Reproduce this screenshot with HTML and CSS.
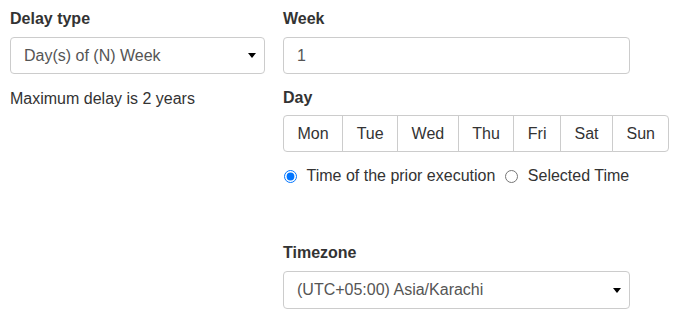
FILE: index.html
```html
<!DOCTYPE html>
<html lang="en">
<head>
    <meta charset="UTF-8">
    <meta name="viewport" content="width=device-width, initial-scale=1.0">
    <title>Delay Settings</title>
    <link rel="stylesheet" href="styles.css">
</head>
<body>
    <div class="delay-form">
        <div class="left-col">
            <label class="field-label">Delay type</label>
            <button type="button" class="dropdown">
                <span>Day(s) of (N) Week</span>
                <span class="caret"></span>
            </button>
            <p class="hint">Maximum delay is 2 years</p>
        </div>

        <div class="right-col">
            <label class="field-label" for="week">Week</label>
            <input type="text" id="week" class="text-input" value="1">

            <label class="field-label day-label">Day</label>
            <div class="day-group">
                <button type="button">Mon</button>
                <button type="button">Tue</button>
                <button type="button">Wed</button>
                <button type="button">Thu</button>
                <button type="button">Fri</button>
                <button type="button">Sat</button>
                <button type="button">Sun</button>
            </div>

            <div class="radio-row">
                <label class="radio"><input type="radio" name="timeMode" checked> Time of the prior execution</label>
                <label class="radio"><input type="radio" name="timeMode"> Selected Time</label>
            </div>

            <label class="field-label tz-label">Timezone</label>
            <button type="button" class="dropdown wide">
                <span>(UTC+05:00) Asia/Karachi</span>
                <span class="caret"></span>
            </button>
        </div>
    </div>
</body>
</html>
```

FILE: styles.css
```css
body {
    font-family: "Liberation Sans", Arial, sans-serif;
    font-size: 16px;
    line-height: 22px;
    color: #333;
    margin: 0;
    padding: 8px 10px;
    background-color: #fff;
}

.delay-form {
    display: flex;
    gap: 18px;
}

.left-col {
    width: 255px;
    display: flex;
    flex-direction: column;
}

.right-col {
    flex: 1;
    display: flex;
    flex-direction: column;
    align-items: flex-start;
}

.field-label {
    display: block;
    font-weight: bold;
    margin-bottom: 7px;
}

.dropdown,
.text-input {
    box-sizing: border-box;
    height: 37px;
    border: 1px solid #ccc;
    border-radius: 4px;
    background-color: #fff;
    font-family: inherit;
    font-size: 16px;
    color: #555;
    padding: 0 13px;
}

.dropdown {
    display: flex;
    align-items: center;
    justify-content: space-between;
    width: 255px;
    padding-right: 8px;
    text-align: left;
}

.dropdown.wide {
    height: 38px;
}

.dropdown.wide,
.text-input {
    width: 347px;
}

.text-input {
    outline: none;
}

.caret {
    width: 0;
    height: 0;
    border-left: 4px solid transparent;
    border-right: 4px solid transparent;
    border-top: 5px solid #000;
}

.hint {
    margin: 14px 0 0;
}

.day-label {
    margin-top: 13px;
    margin-bottom: 6px;
}

.day-group {
    display: flex;
}

.day-group button {
    height: 37px;
    padding: 0 13.5px;
    margin-left: -1px;
    border: 1px solid #ccc;
    background-color: #fff;
    font-family: inherit;
    font-size: 16px;
    color: #333;
}

.day-group button:first-child {
    margin-left: 0;
    border-radius: 4px 0 0 4px;
}

.day-group button:last-child {
    border-radius: 0 4px 4px 0;
}

.radio-row {
    display: flex;
    align-items: center;
    margin-top: 13px;
    height: 22px;
}

.radio {
    display: flex;
    align-items: center;
    margin-right: 9px;
}

.radio input {
    width: 13px;
    height: 13px;
    margin: 0 10px 0 0.5px;
}

.tz-label {
    margin-top: 55px;
}
```
